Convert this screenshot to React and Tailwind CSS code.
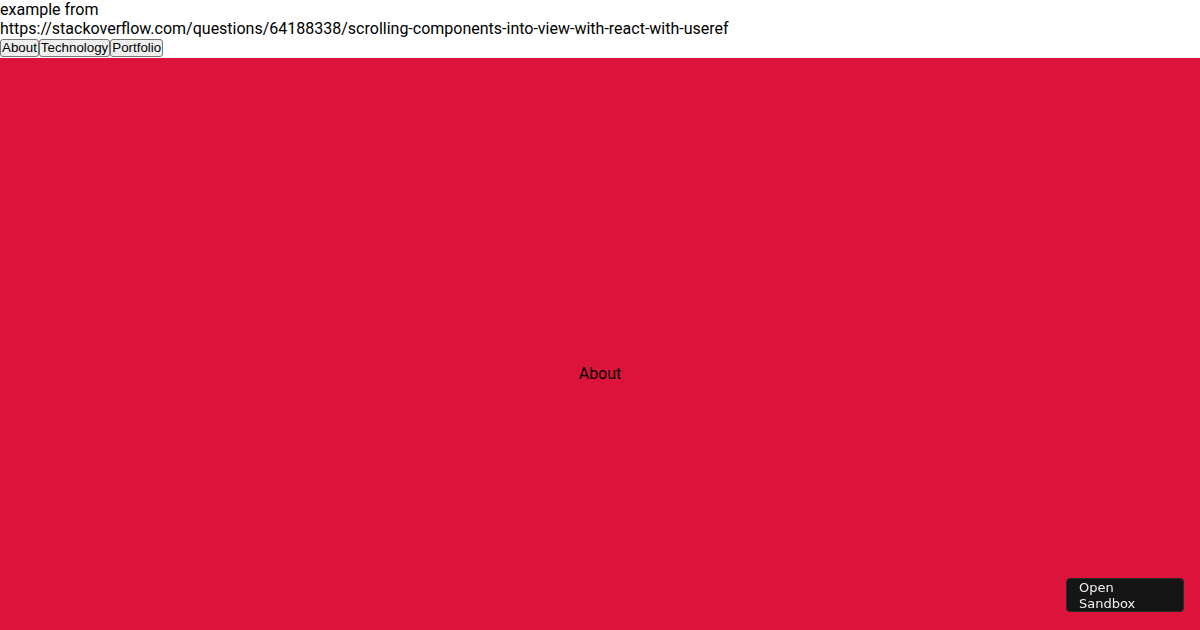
export default function App() {
  const btn =
    "border border-[#767676] rounded-[3px] bg-[#efefef] px-[1px] h-[18px] text-[13.33px] leading-[16px] text-black font-['Liberation_Sans',Arial,sans-serif]";

  return (
    <div className="font-['Roboto',sans-serif] text-[16px] leading-[19px] text-black bg-white">
      <div>example from</div>
      <div>https://stackoverflow.com/questions/64188338/scrolling-components-into-view-with-react-with-useref</div>
      <div className="flex h-[20px] items-start pt-[1px]">
        <button className={btn}>About</button>
        <button className={btn}>Technology</button>
        <button className={btn}>Portfolio</button>
      </div>
      <div className="h-screen bg-[#dc143c] flex items-center justify-center">
        About
      </div>
      <button className="fixed right-[16px] bottom-[18px] w-[118px] h-[34px] rounded-[4px] bg-[#151515] border border-[#2a2a2a] text-left pl-[12px] pt-[1px] text-[13px] leading-[16px] text-[#f0f0f0] font-['DejaVu_Sans',sans-serif]">
        Open
        <br />
        Sandbox
      </button>
    </div>
  );
}
